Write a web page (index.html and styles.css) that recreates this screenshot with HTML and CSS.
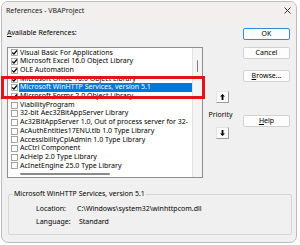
FILE: index.html
```html
<!DOCTYPE html>
<html>
<head>
<meta charset="utf-8">
<link rel="stylesheet" href="styles.css">
</head>
<body>
<div class="dialog">
  <div class="titlebar">
    <span class="title">References - VBAProject</span>
    <svg class="close" width="7" height="7" viewBox="0 0 7 7"><path d="M0.5 0.5 L6.5 6.5 M6.5 0.5 L0.5 6.5" stroke="#1b1b1b" stroke-width="0.9" fill="none"/></svg>
  </div>
  <div class="main">
    <div class="leftcol">
      <div class="label"><u>A</u>vailable References:</div>
      <div class="listbox">
        <div class="listpane">
          <div class="rows">
            <div class="row"><svg class="cb" viewBox="0 0 7 7"><rect x="0.5" y="0.5" width="6" height="6" fill="#fff" stroke="#9a9a9a" stroke-width="0.8"/><path d="M1.3 3.5 L2.9 5.1 L5.9 1.5" stroke="#000" stroke-width="1.3" fill="none"/></svg><span class="txt">Visual Basic For Applications</span></div>
            <div class="row"><svg class="cb" viewBox="0 0 7 7"><rect x="0.5" y="0.5" width="6" height="6" fill="#fff" stroke="#9a9a9a" stroke-width="0.8"/><path d="M1.3 3.5 L2.9 5.1 L5.9 1.5" stroke="#000" stroke-width="1.3" fill="none"/></svg><span class="txt">Microsoft Excel 16.0 Object Library</span></div>
            <div class="row"><svg class="cb" viewBox="0 0 7 7"><rect x="0.5" y="0.5" width="6" height="6" fill="#fff" stroke="#9a9a9a" stroke-width="0.8"/><path d="M1.3 3.5 L2.9 5.1 L5.9 1.5" stroke="#000" stroke-width="1.3" fill="none"/></svg><span class="txt">OLE Automation</span></div>
            <div class="row"><svg class="cb" viewBox="0 0 7 7"><rect x="0.5" y="0.5" width="6" height="6" fill="#fff" stroke="#9a9a9a" stroke-width="0.8"/><path d="M1.3 3.5 L2.9 5.1 L5.9 1.5" stroke="#000" stroke-width="1.3" fill="none"/></svg><span class="txt">Microsoft Office 16.0 Object Library</span></div>
            <div class="row selected"><svg class="cb" viewBox="0 0 7 7"><rect x="0.5" y="0.5" width="6" height="6" fill="#fff" stroke="#9a9a9a" stroke-width="0.8"/><path d="M1.3 3.5 L2.9 5.1 L5.9 1.5" stroke="#000" stroke-width="1.3" fill="none"/></svg><span class="txt">Microsoft WinHTTP Services, version 5.1</span></div>
            <div class="row"><svg class="cb" viewBox="0 0 7 7"><rect x="0.5" y="0.5" width="6" height="6" fill="#fff" stroke="#9a9a9a" stroke-width="0.8"/><path d="M1.3 3.5 L2.9 5.1 L5.9 1.5" stroke="#000" stroke-width="1.3" fill="none"/></svg><span class="txt">Microsoft Forms 2.0 Object Library</span></div>
            <div class="row"><svg class="cb" viewBox="0 0 7 7"><rect x="0.5" y="0.5" width="6" height="6" fill="#fff" stroke="#8a8a8a" stroke-width="0.8"/></svg><span class="txt">ViabilityProgram</span></div>
            <div class="row"><svg class="cb" viewBox="0 0 7 7"><rect x="0.5" y="0.5" width="6" height="6" fill="#fff" stroke="#8a8a8a" stroke-width="0.8"/></svg><span class="txt">32-bit Aec32BitAppServer Library</span></div>
            <div class="row"><svg class="cb" viewBox="0 0 7 7"><rect x="0.5" y="0.5" width="6" height="6" fill="#fff" stroke="#8a8a8a" stroke-width="0.8"/></svg><span class="txt">Ac32BitAppServer 1.0, Out of process server for 32-</span></div>
            <div class="row"><svg class="cb" viewBox="0 0 7 7"><rect x="0.5" y="0.5" width="6" height="6" fill="#fff" stroke="#8a8a8a" stroke-width="0.8"/></svg><span class="txt">AcAuthEntities17ENU.tlb 1.0 Type Library</span></div>
            <div class="row"><svg class="cb" viewBox="0 0 7 7"><rect x="0.5" y="0.5" width="6" height="6" fill="#fff" stroke="#8a8a8a" stroke-width="0.8"/></svg><span class="txt">AccessibilityCplAdmin 1.0 Type Library</span></div>
            <div class="row"><svg class="cb" viewBox="0 0 7 7"><rect x="0.5" y="0.5" width="6" height="6" fill="#fff" stroke="#8a8a8a" stroke-width="0.8"/></svg><span class="txt">AcCtrl Component</span></div>
            <div class="row"><svg class="cb" viewBox="0 0 7 7"><rect x="0.5" y="0.5" width="6" height="6" fill="#fff" stroke="#8a8a8a" stroke-width="0.8"/></svg><span class="txt">AcHelp 2.0 Type Library</span></div>
            <div class="row"><svg class="cb" viewBox="0 0 7 7"><rect x="0.5" y="0.5" width="6" height="6" fill="#fff" stroke="#8a8a8a" stroke-width="0.8"/></svg><span class="txt">AcInetEngine 25.0 Type Library</span></div>
          </div>
          <div class="hscroll"><div class="hthumb"></div></div>
        </div>
        <div class="vscroll"><div class="vthumb"></div></div>
      </div>
    </div>
    <div class="midcol">
      <button class="arrow"><svg width="5" height="6" viewBox="0 0 5 6"><path d="M2.5 0 L5 2.6 L3.4 2.6 L3.4 6 L1.6 6 L1.6 2.6 L0 2.6 Z" fill="#000"/></svg></button>
      <div class="priority">Priority</div>
      <button class="arrow down"><svg width="5" height="6" viewBox="0 0 5 6"><path d="M2.5 6 L5 3.4 L3.4 3.4 L3.4 0 L1.6 0 L1.6 3.4 L0 3.4 Z" fill="#000"/></svg></button>
    </div>
    <div class="rightcol">
      <button class="btn default">OK</button>
      <button class="btn cancel">Cancel</button>
      <button class="btn browse"><u>B</u>rowse...</button>
      <button class="btn help"><u>H</u>elp</button>
    </div>
  </div>
  <fieldset class="group">
    <legend>Microsoft WinHTTP Services, version 5.1</legend>
    <div class="inforow"><span class="k">Location:</span><span class="v">C:\Windows\system32\winhttpcom.dll</span></div>
    <div class="inforow lang"><span class="k">Language:</span><span class="v">Standard</span></div>
  </fieldset>
</div>
<div class="callout"></div>
</body>
</html>
```
FILE: styles.css
```css
html, body {
  margin: 0;
  padding: 0;
}
body {
  position: relative;
  width: 300px;
  height: 245px;
  overflow: hidden;
  background: #ffffff;
  font-family: "Noto Sans", "Open Sans", sans-serif;
  font-size: 7px;
  color: #000;
}
.dialog {
  margin: 1px 0 0 1px;
  width: 296px;
  height: 242px;
  box-sizing: border-box;
  border: 1px solid #bcbcbc;
  border-radius: 7px;
  background: #f0f0f0;
}
.titlebar {
  height: 18px;
  display: flex;
  align-items: center;
  justify-content: space-between;
  padding: 0 5px 1px 4px;
  box-sizing: border-box;
  background: #f3efef;
  border-radius: 6px 6px 0 0;
}
.title {
  color: #1a1a1a;
  line-height: 10px;
}
.close {
  display: block;
}
.main {
  display: flex;
  padding-left: 5px;
}
.leftcol {
  width: 196px;
}
.label {
  margin-top: 8px;
  line-height: 10px;
}
.listbox {
  margin-top: 9px;
  width: 196px;
  height: 131px;
  box-sizing: border-box;
  border: 1px solid #8f8f8f;
  background: #fff;
  display: flex;
}
.listpane {
  flex: 1;
  min-width: 0;
  display: flex;
  flex-direction: column;
}
.rows {
  flex: 1;
  overflow: hidden;
  padding-top: 0.65px;
}
.row {
  height: 8.7px;
  line-height: 8.7px;
  display: flex;
  align-items: center;
  white-space: nowrap;
}
.cb {
  flex: none;
  width: 7px;
  height: 7px;
  margin-left: 3px;
}
.txt {
  margin-left: 1px;
  padding-left: 1px;
}
.row.selected .txt {
  flex: 1;
  background: #0078d7;
  color: #fff;
}
.hscroll {
  height: 6px;
  padding-top: 2px;
  box-sizing: border-box;
}
.hthumb {
  margin-left: 12px;
  width: 90px;
  height: 1.6px;
  border-radius: 1px;
  background: #8a8a8a;
}
.vscroll {
  width: 10px;
  flex: none;
  box-sizing: border-box;
  border-left: 1px solid #e2e2e2;
  background: #f4f4f4;
}
.vthumb {
  margin: 12px 0 0 4px;
  width: 1.4px;
  height: 12px;
  background: #7e7e7e;
  border-radius: 1px;
}
.midcol {
  width: 38px;
  display: flex;
  flex-direction: column;
  align-items: center;
}
.arrow {
  margin-top: 71px;
  width: 13px;
  height: 12px;
  padding: 0;
  box-sizing: border-box;
  border: 1px solid;
  border-color: #e4e4e4 #9c9c9c #9c9c9c #e4e4e4;
  background: #fbfbfb;
  display: flex;
  align-items: center;
  justify-content: center;
}
.arrow svg {
  display: block;
}
.arrow.down {
  margin-top: 7px;
}
.priority {
  margin-top: 7px;
  line-height: 10px;
  margin-right: 3px;
}
.rightcol {
  margin-left: 2px;
  width: 47px;
  padding-top: 8px;
  display: flex;
  flex-direction: column;
}
.btn {
  width: 47px;
  height: 12px;
  box-sizing: border-box;
  padding: 0;
  border: 1px solid #d2d2d2;
  border-radius: 2px;
  background: #fdfdfd;
  font-family: inherit;
  font-size: 7px;
  line-height: 10px;
  color: #000;
}
.btn.default {
  border-color: #3d88d2;
}
.btn.cancel {
  margin-top: 7px;
}
.btn.browse {
  margin-top: 11px;
}
.btn.help {
  margin-top: 33px;
}
.group {
  margin: 11px 4px 0 6px;
  padding: 5px 4px 7px 4px;
  border: 1px solid #d6d6d6;
  border-radius: 2px;
  min-width: 0;
}
.group legend {
  padding: 0 1px;
  line-height: 10px;
}
.inforow {
  display: flex;
  line-height: 10px;
}
.inforow.lang {
  margin-top: 3px;
}
.k {
  margin-left: 23px;
  width: 41px;
  flex: none;
}
.inforow.lang .v {
  margin-left: 2px;
}
.callout {
  position: absolute;
  left: 1px;
  top: 76px;
  width: 204px;
  height: 23px;
  box-sizing: border-box;
  border: 3px solid #e3121b;
}
```
